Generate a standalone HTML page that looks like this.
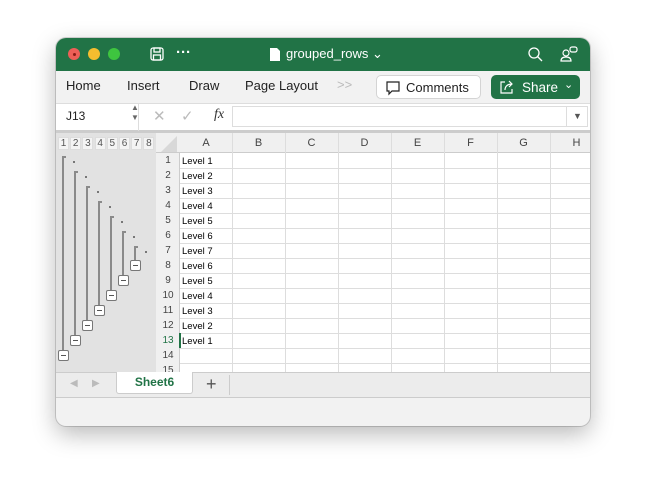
<!DOCTYPE html>
<html><head><style>
*{box-sizing:border-box;margin:0;padding:0}
body{width:646px;height:500px;background:#fff;font-family:"Liberation Sans",sans-serif;position:relative;overflow:hidden}
.a{position:absolute}
.win{left:56px;top:38px;width:534px;height:388px;border-radius:10px;overflow:hidden;background:#f2f2f2;box-shadow:0 8px 24px rgba(0,0,0,.28),0 0 0 1px rgba(0,0,0,.15)}
.t{font-size:13px;color:#222}
.hd{font-size:11px;color:#444;text-align:center}
.rn{font-size:10px;color:#444;text-align:center;width:24px}
.cell{font-size:9.5px;color:#000}
.vl{background:#8a8a8a;width:2px}
.hl{background:#8a8a8a;height:2px}
.btn{width:11px;height:11px;border:1px solid #777;border-radius:2px;background:#fff}
.btn:after{content:"";position:absolute;left:2px;top:4px;width:5px;height:1px;background:#555}
.dot{width:2px;height:2px;background:#777}
</style></head><body>
<div class="a win">
 <div class="a" style="left:0;top:0;width:534px;height:33px;background:#217346"></div>
 <div class="a" style="left:12px;top:10px;width:12px;height:12px;border-radius:50%;background:#ee5f57"></div>
 <div class="a" style="left:17px;top:15px;width:3px;height:3px;border-radius:50%;background:#8a1c15"></div>
 <div class="a" style="left:32px;top:10px;width:12px;height:12px;border-radius:50%;background:#f5bd2f"></div>
 <div class="a" style="left:52px;top:10px;width:12px;height:12px;border-radius:50%;background:#3ec53f"></div>
 <svg class="a" style="left:93px;top:8px" width="16" height="16" viewBox="0 0 16 16" fill="none" stroke="#fff" stroke-width="1.3"><rect x="2" y="2" width="12" height="12" rx="2"/><rect x="5" y="2" width="6" height="4"/><rect x="4.5" y="9" width="7" height="5"/></svg>
 <div class="a" style="left:120px;top:6px;color:#fff;font-size:15px;font-weight:bold">···</div>
 <svg class="a" style="left:213px;top:9px" width="12" height="15" viewBox="0 0 12 15"><path d="M1 1h7l3 3v10H1z" fill="#fff"/></svg>
 <div class="a" style="left:230px;top:8px;color:#fff;font-size:13px">grouped_rows ⌄</div>
 <svg class="a" style="left:471px;top:8px" width="16" height="16" viewBox="0 0 16 16" fill="none" stroke="#fff" stroke-width="1.3"><circle cx="7" cy="7" r="5"/><path d="M10.5 10.5L15 15"/></svg>
 <svg class="a" style="left:504px;top:7px" width="18" height="18" viewBox="0 0 18 18" fill="none" stroke="#fff" stroke-width="1.2"><circle cx="6" cy="8" r="3"/><path d="M1 16c0-3 2-4 5-4s5 1 5 4z"/><rect x="10" y="2" width="7" height="5" rx="2"/></svg>
 <div class="a t" style="left:10px;top:40px">Home</div>
 <div class="a t" style="left:71px;top:40px">Insert</div>
 <div class="a t" style="left:133px;top:40px">Draw</div>
 <div class="a t" style="left:189px;top:40px">Page Layout</div>
 <div class="a" style="left:281px;top:39px;color:#bbb;font-size:13px">&gt;&gt;</div>
 <div class="a" style="left:320px;top:37px;width:105px;height:24px;border:1px solid #d4d4d4;border-radius:5px;background:#fff"></div>
 <svg class="a" style="left:329px;top:42px" width="16" height="16" viewBox="0 0 16 16" fill="none" stroke="#222" stroke-width="1.2"><path d="M2 2h12v9H7l-3 3v-3H2z"/></svg>
 <div class="a t" style="left:350px;top:42px">Comments</div>
 <div class="a" style="left:435px;top:37px;width:89px;height:24px;border-radius:5px;background:#217346"></div>
 <svg class="a" style="left:443px;top:41px" width="16" height="16" viewBox="0 0 16 16" fill="none" stroke="#fff" stroke-width="1.2"><path d="M6 3H2v11h11v-4"/><path d="M6 11c0-4 3-6 7-6M10 2l3 3-3 3"/></svg>
 <div class="a" style="left:466px;top:42px;color:#fff;font-size:13.5px">Share</div>
 <div class="a" style="left:508px;top:40px;color:#fff;font-size:11px">⌄</div>
 <div class="a" style="left:0;top:65px;width:534px;height:28px;background:#fff;border-top:1px solid #ddd;border-bottom:1px solid #ccc"></div>
 <div class="a" style="left:82px;top:65px;width:1px;height:28px;background:#ddd"></div>
 <div class="a" style="left:10px;top:71px;font-size:12px;color:#222">J13</div>
 <div class="a" style="left:75px;top:65px;font-size:8px;color:#666;line-height:10px">▲<br>▼</div>
 <div class="a" style="left:97px;top:69px;font-size:15px;color:#bbb">✕</div>
 <div class="a" style="left:125px;top:69px;font-size:15px;color:#bbb">✓</div>
 <div class="a" style="left:158px;top:69px;font-size:14px;color:#333;font-family:'Liberation Serif',serif;font-style:italic">fx</div>
 <div class="a" style="left:176px;top:68px;width:356px;height:21px;border:1px solid #ddd;background:#fff"></div>
 <div class="a" style="left:510px;top:68px;width:22px;height:21px;border-left:1px solid #ddd;font-size:9px;color:#555;text-align:center;line-height:21px">▼</div>
 <div class="a" style="left:0;top:93px;width:534px;height:241px;background:#fff;border-top:2px solid #ccc"></div>
 <div class="a" style="left:0;top:95px;width:100px;height:239px;background:#e2e2e2"></div>
 <div class="a" style="left:100px;top:95px;width:24px;height:239px;background:#f0f0f0;border-right:1px solid #ccc"></div>
 <div class="a" style="left:100px;top:95px;width:434px;height:20px;background:#f0f0f0;border-bottom:1px solid #ccc"></div>
 <svg class="a" style="left:105px;top:98px" width="16" height="16"><path d="M16 0V16H0z" fill="#d8d8d8"/></svg>
</div>
<script>
(function(){
var w=document.querySelector('.win'),h='',i;
for(i=1;i<=8;i++)h+='<div class="a" style="left:'+(2+(i-1)*12.2)+'px;top:99px;width:11px;height:13px;background:#f4f4f4;border:1px solid #ddd;font-size:10px;color:#555;text-align:center;line-height:12px">'+i+'</div>';
var cols=['A','B','C','D','E','F','G','H'],xs=[124,176,229,282,335,388,441,494,547];
for(i=0;i<8;i++){h+='<div class="a hd" style="left:'+xs[i]+'px;top:99px;width:'+(xs[i+1]-xs[i])+'px">'+cols[i]+'</div>';
 h+='<div class="a" style="left:'+xs[i+1]+'px;top:95px;width:1px;height:239px;background:#ddd"></div>';}
var lab=['Level 1','Level 2','Level 3','Level 4','Level 5','Level 6','Level 7','Level 6','Level 5','Level 4','Level 3','Level 2','Level 1','',''];
for(i=0;i<15;i++){var y=115+i*15;
 h+='<div class="a rn" style="left:100px;top:'+(y+2)+'px;'+(i==12?'color:#217346':'')+'">'+(i+1)+'</div>';
 h+='<div class="a" style="left:124px;top:'+(y+15)+'px;width:410px;height:1px;background:#ddd"></div>';
 if(lab[i])h+='<div class="a cell" style="left:126px;top:'+(y+3)+'px">'+lab[i]+'</div>';}
h+='<div class="a" style="left:123px;top:295px;width:2px;height:15px;background:#217346"></div>';
for(var k=1;k<=7;k++){var x=6+(k-1)*12,tp=115+(k-1)*15+3,by=115+(14-k)*15+2;
 h+='<div class="a vl" style="left:'+x+'px;top:'+tp+'px;height:'+(by-tp)+'px"></div>';
 h+='<div class="a hl" style="left:'+x+'px;top:'+tp+'px;width:4px"></div>';
 h+='<div class="a dot" style="left:'+(x+11)+'px;top:'+(tp+5)+'px"></div>';
 h+='<div class="a btn" style="left:'+(x-4)+'px;top:'+by+'px"></div>';}
h+='<div class="a" style="left:0;top:334px;width:534px;height:26px;background:#ececec;border-top:1px solid #ccc;border-bottom:1px solid #ccc"></div>';
h+='<div class="a" style="left:14px;top:340px;font-size:10px;color:#bbb">◀</div><div class="a" style="left:36px;top:340px;font-size:10px;color:#bbb">▶</div>';
h+='<div class="a" style="left:60px;top:334px;width:77px;height:22px;background:#fff;border:1px solid #ccc;border-top:none;border-radius:0 0 3px 3px;color:#217346;font-weight:bold;font-size:12px;text-align:center;line-height:21px">Sheet6</div>';
h+='<div class="a" style="left:150px;top:336px;font-size:18px;color:#555">+</div>';
h+='<div class="a" style="left:173px;top:337px;width:1px;height:20px;background:#ccc"></div>';
w.insertAdjacentHTML('beforeend',h);
})();
</script>
</body></html>
